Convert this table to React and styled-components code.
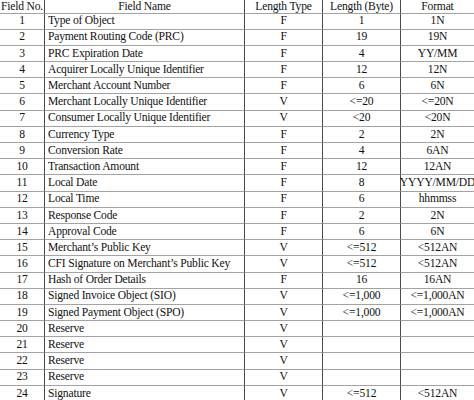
import React from "react";
import styled, { createGlobalStyle } from "styled-components";

const GlobalStyle = createGlobalStyle`
  html, body {
    margin: 0;
    padding: 0;
    background: #ffffff;
  }
  body {
    font-family: "Liberation Serif", "Times New Roman", serif;
    color: #111;
    overflow: hidden;
  }
`;

const rows = [
  ["1", "Type of Object", "F", "1", "1N"],
  ["2", "Payment Routing Code (PRC)", "F", "19", "19N"],
  ["3", "PRC Expiration Date", "F", "4", "YY/MM"],
  ["4", "Acquirer Locally Unique Identifier", "F", "12", "12N"],
  ["5", "Merchant Account Number", "F", "6", "6N"],
  ["6", "Merchant Locally Unique Identifier", "V", "<=20", "<=20N"],
  ["7", "Consumer Locally Unique Identifier", "V", "<20", "<20N"],
  ["8", "Currency Type", "F", "2", "2N"],
  ["9", "Conversion Rate", "F", "4", "6AN"],
  ["10", "Transaction Amount", "F", "12", "12AN"],
  ["11", "Local Date", "F", "8", "YYYY/MM/DD"],
  ["12", "Local Time", "F", "6", "hhmmss"],
  ["13", "Response Code", "F", "2", "2N"],
  ["14", "Approval Code", "F", "6", "6N"],
  ["15", "Merchant’s Public Key", "V", "<=512", "<512AN"],
  ["16", "CFI Signature on Merchant’s Public Key", "V", "<=512", "<512AN"],
  ["17", "Hash of Order Details", "F", "16", "16AN"],
  ["18", "Signed Invoice Object (SIO)", "V", "<=1,000", "<=1,000AN"],
  ["19", "Signed Payment Object (SPO)", "V", "<=1,000", "<=1,000AN"],
  ["20", "Reserve", "V", "", ""],
  ["21", "Reserve", "V", "", ""],
  ["22", "Reserve", "V", "", ""],
  ["23", "Reserve", "V", "", ""],
  ["24", "Signature", "V", "<=512", "<512AN"],
];

const Table = styled.div`
  display: grid;
  grid-template-columns: 44px 200px 78px 78px 74px;
  grid-template-rows: 13.5px repeat(24, 16.2px);
  width: 474px;
  height: 400px;
  overflow: hidden;
  font-size: 11.6px;
  letter-spacing: -0.2px;
  line-height: 1;
`;

const Cell = styled.div`
  display: flex;
  align-items: center;
  justify-content: ${(p) => (p.$left ? "flex-start" : "center")};
  padding-left: ${(p) => (p.$left ? "3px" : "0")};
  border-bottom: 1.5px solid #a3a3a3;
  border-left: ${(p) => (p.$first ? "none" : "1.5px solid #4a4a4a")};
  white-space: nowrap;
  overflow: visible;
  box-sizing: border-box;
`;

const HeadCell = styled(Cell)`
  align-items: flex-start;
  padding-top: 1px;
`;

// the source scan is a little stretched vertically
const Text = styled.span`
  display: inline-block;
  transform: scaleY(1.12);
`;

export default function App() {
  return (
    <>
      <GlobalStyle />
      <Table>
        <HeadCell $first><Text>Field No.</Text></HeadCell>
        <HeadCell><Text>Field Name</Text></HeadCell>
        <HeadCell><Text>Length Type</Text></HeadCell>
        <HeadCell><Text>Length (Byte)</Text></HeadCell>
        <HeadCell><Text>Format</Text></HeadCell>
        {rows.map((r) => (
          <React.Fragment key={r[0]}>
            <Cell $first><Text>{r[0]}</Text></Cell>
            <Cell $left><Text>{r[1]}</Text></Cell>
            <Cell><Text>{r[2]}</Text></Cell>
            <Cell><Text>{r[3]}</Text></Cell>
            <Cell><Text>{r[4]}</Text></Cell>
          </React.Fragment>
        ))}
      </Table>
    </>
  );
}
